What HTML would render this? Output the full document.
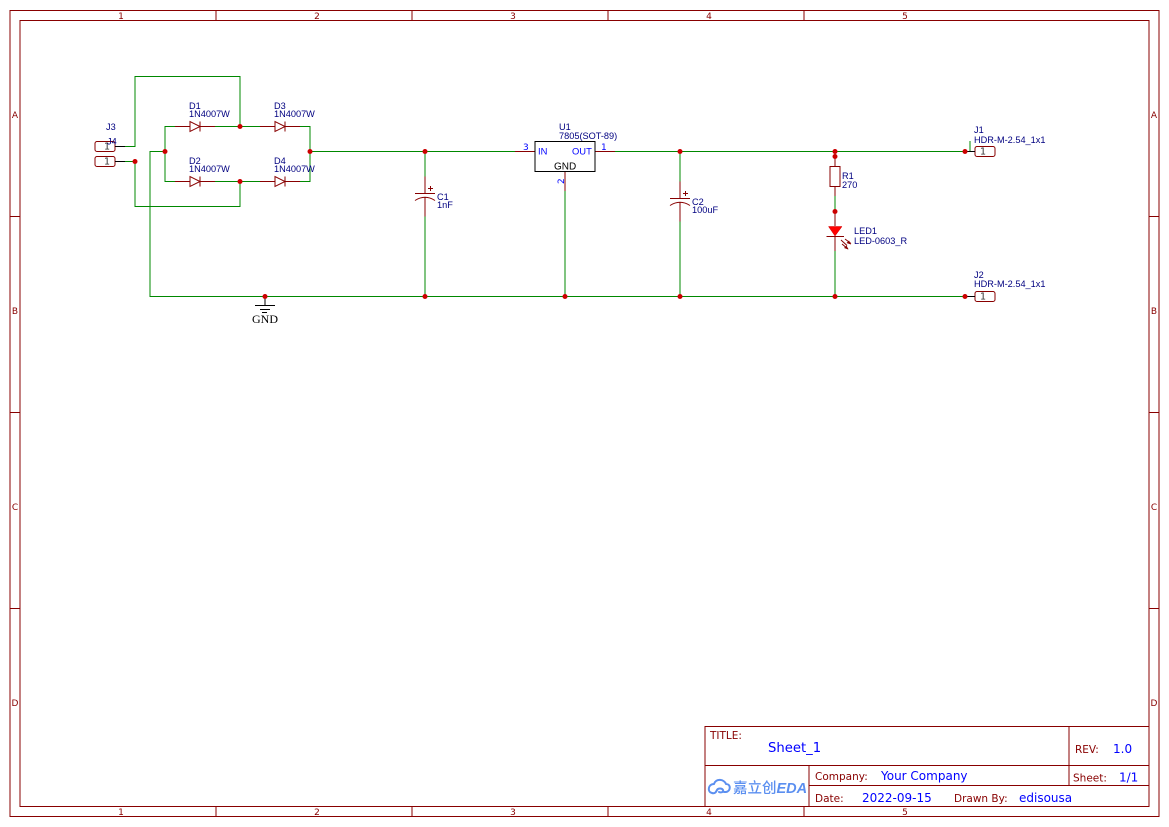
<!DOCTYPE html>
<html><head><meta charset="utf-8"><style>
html,body{margin:0;padding:0;background:#fff;width:1169px;height:827px;overflow:hidden}
svg{display:block}
text{white-space:pre}
.b{font:9px "DejaVu Sans",sans-serif;fill:#880000;text-anchor:middle}
.n{font:9.2px "Liberation Sans",sans-serif;fill:#000080}
.p{font:9px "DejaVu Sans",sans-serif;fill:#0000ff}
.c{font:9.5px "DejaVu Sans",sans-serif;fill:#333;text-anchor:middle}
.t{font:10.5px "DejaVu Sans",sans-serif;fill:#880000}
.v{font:12px "DejaVu Sans",sans-serif;fill:#0000ff}
</style></head><body>
<svg width="1169" height="827" viewBox="0 0 1169 827" xmlns="http://www.w3.org/2000/svg">
<g fill="none" stroke="#880000" stroke-width="1">
<rect x="10" y="10.5" width="1149" height="806"/>
<rect x="20" y="20.5" width="1129" height="786"/>
<path d="M216 10.5V20.5M412 10.5V20.5M608 10.5V20.5M804 10.5V20.5M216 806.5V816.5M412 806.5V816.5M608 806.5V816.5M804 806.5V816.5"/>
<path d="M10 216.5H20M10 412.5H20M10 608.5H20M1149 216.5H1159M1149 412.5H1159M1149 608.5H1159"/>
<rect x="705" y="726.5" width="444" height="80"/>
<path d="M705 765.5H1149M809 785.5H1149M809 765.5V806.5M1069 726.5V785.5"/>
</g>
<g class="b">
<text x="121" y="19" class="b">1</text><text x="317" y="19" class="b">2</text><text x="513" y="19" class="b">3</text><text x="709" y="19" class="b">4</text><text x="905" y="19" class="b">5</text>
<text x="121" y="815" class="b">1</text><text x="317" y="815" class="b">2</text><text x="513" y="815" class="b">3</text><text x="709" y="815" class="b">4</text><text x="905" y="815" class="b">5</text>
<text x="15" y="118" class="b">A</text><text x="15" y="314" class="b">B</text><text x="15" y="510" class="b">C</text><text x="15" y="706" class="b">D</text>
<text x="1154" y="118" class="b">A</text><text x="1154" y="314" class="b">B</text><text x="1154" y="510" class="b">C</text><text x="1154" y="706" class="b">D</text>
</g>

<!-- wires -->
<g fill="none" stroke="#008800" stroke-width="1">
<path d="M125 146.5H135V76.5H240V126.5"/>
<path d="M125 161.5H135V206.5H240V181.5"/>
<path d="M175 126.5H165V181.5H175"/>
<path d="M215 126.5H260M215 181.5H260"/>
<path d="M300 126.5H310V181.5H300"/>
<path d="M165 151.5H150V296.5H965"/>
<path d="M310 151.5H515M615 151.5H965"/>
<path d="M425 151.5V176.5M425 216.5V296.5"/>
<path d="M565 191V296.5"/>
<path d="M680 151.5V181.5M680 221.5V296.5"/>
<path d="M835 151.5V166M835 196V211.5M835 251V296.5"/>
<path d="M970 141V151.5"/>
</g>

<!-- diodes -->
<g fill="none" stroke="#880000" stroke-width="1">
<path d="M175 126.5H190M200 126.5H215M190 121.5V131.5L200 126.5L190 121.5ZM200 121.5V131.5"/>
<path d="M175 181.5H190M200 181.5H215M190 176.5V186.5L200 181.5L190 176.5ZM200 176.5V186.5"/>
<path d="M260 126.5H275M285 126.5H300M275 121.5V131.5L285 126.5L275 121.5ZM285 121.5V131.5"/>
<path d="M260 181.5H275M285 181.5H300M275 176.5V186.5L285 181.5L275 176.5ZM285 176.5V186.5"/>
<!-- caps -->
<path d="M425 176.5V193M425 197V216.5M415 193.5H435M415 200.5Q425 194 435 200.5"/>
<path d="M680 181.5V198M680 202V221.5M670 198.5H690M670 205.5Q680 199 690 205.5"/>
<path d="M428 188.5H433M430.5 186V191M683 193.5H688M685.5 191V196"/>
<!-- U1 pins -->
<path d="M515 151.5H535M595 151.5H615M565 171.5V191"/>
<!-- R1 -->
<path d="M835 156.5V166.5M835 186.5V196"/>
<rect x="830" y="166.5" width="10" height="20"/>
<!-- LED -->
<path d="M835 211.5V226M835 236.5V251M826.5 236.5H844"/>
<path d="M841 240L847 245.500M845 239L851 243.500" />
<path d="M842 244L848 249"/>
<!-- connectors -->
<rect x="95" y="141.500" width="20" height="10" rx="2"/>
<rect x="95" y="156.500" width="20" height="10" rx="2"/>
<rect x="975" y="146.500" width="20" height="10" rx="2"/>
<rect x="975" y="291.500" width="20" height="10" rx="2"/>
</g>
<path d="M828.500 226.500H842L835 236Z" fill="#ff0000" stroke="#cc0000" stroke-width="0.5"/>
<path d="M851 244.500L846.500 243L849 240.500ZM848.500 249.500L844 248L846.500 245.500Z" fill="#880000"/>

<g fill="none" stroke="#000" stroke-width="1">
<path d="M115 146.500H125M115 161.500H125M965 151.500H975M965 296.500H975"/>
<rect x="535" y="141.500" width="60" height="30"/>
<path d="M265 296.500V305.500M255 305.500H275M260 309.500H270M262 312.500H267"/>
</g>

<!-- junctions -->
<g fill="#cc0000">
<circle cx="135" cy="161.500" r="2.500"/><circle cx="165" cy="151.500" r="2.500"/><circle cx="240" cy="126.500" r="2.500"/><circle cx="240" cy="181.500" r="2.500"/><circle cx="310" cy="151.500" r="2.500"/>
<circle cx="425" cy="151.500" r="2.500"/><circle cx="680" cy="151.500" r="2.500"/><circle cx="835" cy="151.500" r="2.500"/><circle cx="835" cy="156.500" r="2.500"/><circle cx="835" cy="211.500" r="2.500"/><circle cx="965" cy="151.500" r="2.500"/>
<circle cx="265" cy="296.500" r="2.500"/><circle cx="425" cy="296.500" r="2.500"/><circle cx="565" cy="296.500" r="2.500"/><circle cx="680" cy="296.500" r="2.500"/><circle cx="835" cy="296.500" r="2.500"/><circle cx="965" cy="296.500" r="2.500"/>
</g>

<!-- labels -->
<text class="n" x="189" y="109">D1</text><text class="n" x="189" y="117">1N4007W</text>
<text class="n" x="274" y="109">D3</text><text class="n" x="274" y="117">1N4007W</text>
<text class="n" x="189" y="164">D2</text><text class="n" x="189" y="172">1N4007W</text>
<text class="n" x="274" y="164">D4</text><text class="n" x="274" y="172">1N4007W</text>
<text class="n" x="106" y="130">J3</text><text class="n" x="107" y="144.500">J4</text>
<text class="n" x="559" y="130">U1</text><text class="n" x="559" y="139">7805(SOT-89)</text>
<text class="n" x="437" y="200">C1</text><text class="n" x="437" y="208">1nF</text>
<text class="n" x="692" y="205">C2</text><text class="n" x="692" y="213">100uF</text>
<text class="n" x="842" y="179">R1</text><text class="n" x="842" y="188">270</text>
<text class="n" x="854" y="234">LED1</text><text class="n" x="854" y="244">LED-0603_R</text>
<text class="n" x="974" y="133">J1</text><text class="n" x="974" y="143">HDR-M-2.54_1x1</text>
<text class="n" x="974" y="278">J2</text><text class="n" x="974" y="287">HDR-M-2.54_1x1</text>

<text class="c" x="107" y="149.500">1</text><text class="c" x="107" y="164.500">1</text>
<text class="c" x="983" y="154.500">1</text><text class="c" x="983" y="299.500">1</text>

<text class="p" x="523" y="150" style="font-size:9px">3</text>
<text class="p" x="601" y="150">1</text>
<text class="p" x="564" y="184" transform="rotate(-90 564 184)">2</text>
<text class="p" x="538" y="154.500" style="font-family:'Liberation Sans',sans-serif;font-size:9.400px">IN</text>
<text class="p" x="572" y="154.500" style="font-family:'Liberation Sans',sans-serif;font-size:9.400px">OUT</text>
<text x="554" y="169.500" style="font:10px 'Liberation Sans',sans-serif;fill:#000">GND</text>
<text x="252" y="323" style="font:12px 'Liberation Serif',serif;fill:#000">GND</text>

<!-- title block -->
<text class="t" x="710" y="739">TITLE:</text>
<text x="768" y="752" style="font:13.200px 'DejaVu Sans',sans-serif;fill:#0000ff">Sheet_1</text>
<text class="t" x="1075" y="753">REV:</text>
<text class="v" x="1113" y="753">1.0</text>
<text class="t" x="815" y="780">Company:</text>
<text class="v" x="881" y="780">Your Company</text>
<text class="t" x="1073" y="781.500">Sheet:</text>
<text class="v" x="1119" y="781.500">1/1</text>
<text class="t" x="815" y="802">Date:</text>
<text class="v" x="862" y="802">2022-09-15</text>
<text class="t" x="954" y="802">Drawn By:</text>
<text class="v" x="1019" y="802">edisousa</text>

<!-- logo -->
<path d="M724 792H726C731 791 731 784 726 784C724 779 716 778 714 784C708 784 707 792 712 793C715 794 716 792 717 790C718 788 722 788 723 790C724 792 721 793 719 792" fill="none" stroke="#5b8ff0" stroke-width="2" stroke-linecap="round" stroke-linejoin="round"/>
<text x="733" y="793" style="font:500 14.500px 'Noto Sans CJK SC',sans-serif;fill:#5b8ff0">嘉立创</text>
<text x="776.500" y="793" style="font:italic bold 14.500px 'Liberation Sans',sans-serif;fill:#5b8ff0">EDA</text>
</svg>
</body></html>
